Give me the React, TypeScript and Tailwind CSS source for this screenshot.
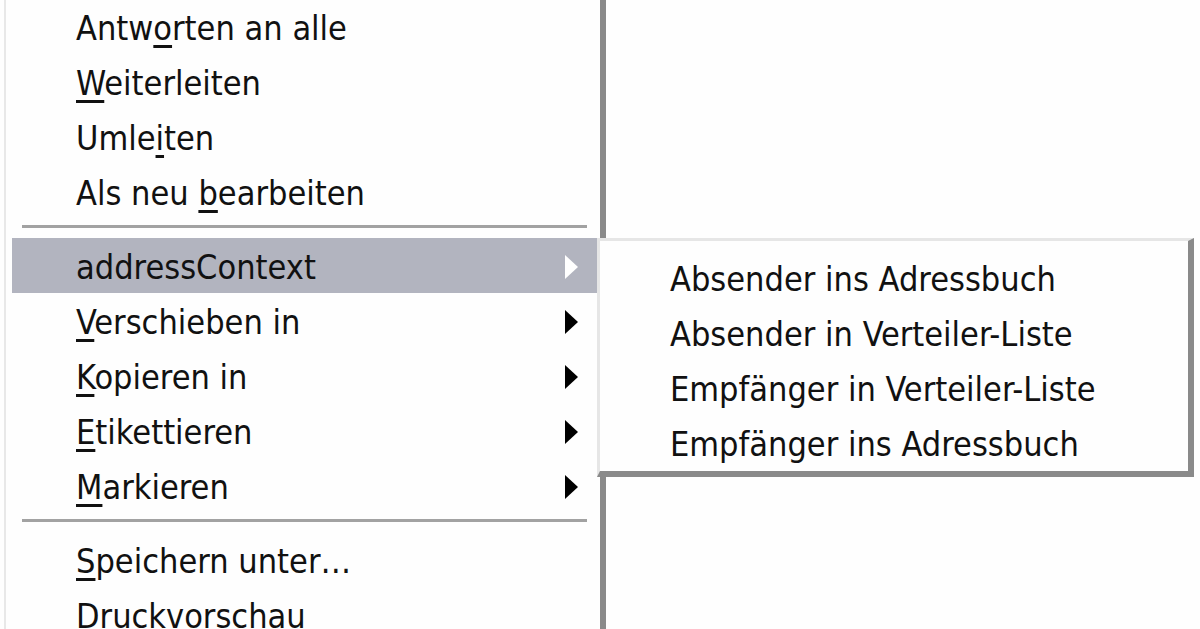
import React from "react";

type Item =
  | { kind: "sep" }
  | { kind: "item"; label: string; u?: number; sub?: boolean; active?: boolean };

const MAIN: Item[] = [
  { kind: "item", label: "Antworten an alle", u: 4 },
  { kind: "item", label: "Weiterleiten", u: 0 },
  { kind: "item", label: "Umleiten", u: 4 },
  { kind: "item", label: "Als neu bearbeiten", u: 8 },
  { kind: "sep" },
  { kind: "item", label: "addressContext", sub: true, active: true },
  { kind: "item", label: "Verschieben in", u: 0, sub: true },
  { kind: "item", label: "Kopieren in", u: 0, sub: true },
  { kind: "item", label: "Etikettieren", u: 0, sub: true },
  { kind: "item", label: "Markieren", u: 0, sub: true },
  { kind: "sep" },
  { kind: "item", label: "Speichern unter…", u: 0 },
  { kind: "item", label: "Druckvorschau" },
];

const SUB = [
  "Absender ins Adressbuch",
  "Absender in Verteiler-Liste",
  "Empfänger in Verteiler-Liste",
  "Empfänger ins Adressbuch",
];

const FONT = "font-['DejaVu_Sans_Condensed','DejaVu_Sans',sans-serif] font-stretch-condensed";

function Label({ text, u }: { text: string; u?: number }) {
  if (u === undefined) return <span>{text}</span>;
  return (
    <span>
      {text.slice(0, u)}
      <span className="underline decoration-[3px] underline-offset-[5px]">{text[u]}</span>
      {text.slice(u + 1)}
    </span>
  );
}

function Arrow({ white }: { white?: boolean }) {
  return (
    <svg width="13" height="24" viewBox="0 0 13 24" aria-hidden>
      <polygon points="0,0 13,12 0,24" fill={white ? "#ffffff" : "#000000"} />
    </svg>
  );
}

export default function App() {
  return (
    <div className={`relative h-[629px] w-[1200px] overflow-hidden bg-[#fefefe] text-[34px] text-[#111] ${FONT}`}>
      {/* main context menu, top is cut off by the screenshot */}
      <div className="-mt-px ml-[4px] w-[602px] border-l-2 border-r-[6px] border-l-[#e8e8e8] border-r-[#8a8a8a] bg-[#fefefe]">
        {MAIN.map((it, i) =>
          it.kind === "sep" ? (
            <div key={i} className="h-[19px] pl-[16px] pr-[13px] pt-[6px]">
              <div className="h-[3px] bg-[#a2a2a2]" />
            </div>
          ) : (
            <div
              key={i}
              className={`ml-[6px] mr-[3px] flex h-[55px] items-center justify-between pl-[64px] pr-[19px] pt-[3px] leading-none ${
                it.active ? "bg-[#b2b4bf]" : ""
              }`}
            >
              <Label text={it.label} u={it.u} />
              {it.sub && <Arrow white={it.active} />}
            </div>
          ),
        )}
      </div>

      {/* open submenu */}
      <div className="absolute left-[597px] top-[238px] w-[597px] border-b-[6px] border-l-[3px] border-r-[6px] border-t-[3px] border-b-[#8a8a8a] border-l-[#e6e6e6] border-r-[#8a8a8a] border-t-[#e6e6e6] bg-[#fefefe] pb-px pt-[9px]">
        {SUB.map((s) => (
          <div key={s} className="flex h-[55px] items-center pl-[70px] pt-[3px] leading-none">
            {s}
          </div>
        ))}
      </div>
    </div>
  );
}
